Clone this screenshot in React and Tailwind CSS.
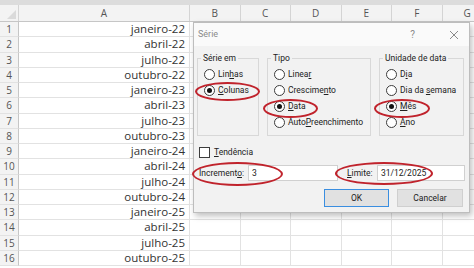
import React from "react";

const months = ["janeiro", "abril", "julho", "outubro"];
const data = [];
for (const y of [22, 23, 24, 25]) for (const m of months) data.push(`${m}-${y}`);
const cols = ["B", "C", "D", "E", "F", "G"];

function U({ t, i }) {
  return (
    <span>
      {t.slice(0, i)}
      <span className="underline underline-offset-1">{t[i]}</span>
      {t.slice(i + 1)}
    </span>
  );
}

function Radio({ on, label }) {
  return (
    <div className="flex items-center gap-[3px] h-[16px] whitespace-nowrap">
      <span className="w-[11px] h-[11px] rounded-full border border-[#3c3c3c] bg-white flex items-center justify-center shrink-0">
        {on && <span className="w-[5px] h-[5px] rounded-full bg-[#111]" />}
      </span>
      <span>{label}</span>
    </div>
  );
}

function Ellipse({ cls }) {
  return <div className={`absolute rounded-[50%] border-2 border-[#c0232c] ${cls}`} />;
}

export default function App() {
  return (
    <div
      className="relative w-[474px] h-[268px] overflow-hidden bg-white text-[#222]"
      style={{ fontFamily: '"Open Sans", "Noto Sans", sans-serif' }}
    >
      {/* top band */}
      <div className="h-[5px] bg-[#dcdcdc]" />
      {/* header row */}
      <div className="flex h-[17px] bg-[#f3f3f3] border-b border-[#c6c6c6] text-[10px] leading-[14px] text-[#555]">
        <div className="w-[19px] shrink-0 border-r border-[#d4d4d4] flex items-end justify-end p-[2px]">
          <div className="w-0 h-0 border-l-[9px] border-l-transparent border-b-[9px] border-b-[#dadada]" />
        </div>
        <div className="w-[171px] shrink-0 border-r border-[#d4d4d4] flex items-center justify-center">A</div>
        {cols.map((c) => (
          <div key={c} className="w-[50.5px] shrink-0 border-r border-[#d4d4d4] flex items-center justify-center">
            {c}
          </div>
        ))}
      </div>
      {/* rows */}
      {data.map((d, i) => (
        <div key={i} className="flex h-[15.25px] text-[11.5px] leading-[14px]">
          <div className="w-[19px] shrink-0 bg-[#f3f3f3] border-r border-[#c6c6c6] border-b border-b-[#e2e2e2] flex items-center justify-center text-[10px] text-[#555]">
            {i + 1}
          </div>
          <div className="w-[171px] shrink-0 border-r border-b border-[#e2e2e2] flex items-center justify-end pr-[4px] text-[#333]">
            {d}
          </div>
          {cols.map((c) => (
            <div key={c} className="w-[50.5px] shrink-0 border-r border-b border-[#e2e2e2]" />
          ))}
        </div>
      ))}

      {/* dialog */}
      <div
        className="absolute left-[193px] top-[22px] w-[277px] h-[191px] bg-[#f2f2f2] border border-[#bdbdbd] shadow-[2px_3px_6px_rgba(0,0,0,0.25)] text-[8.5px] text-[#222] flex flex-col"
        style={{ fontFamily: 'Roboto, "Noto Sans", sans-serif' }}
      >
        <div className="h-[23px] bg-[#fafafa] flex items-center pl-[4px] pr-[10px] text-[#8a8a8a] shrink-0 text-[9px]">
          <span className="flex-1">Série</span>
          <span className="mr-[34px] text-[10px]">?</span>
          <svg width="10" height="10" viewBox="0 0 10 10">
            <path d="M1 1 L9 9 M9 1 L1 9" stroke="#8a8a8a" strokeWidth="1" />
          </svg>
        </div>
        <div className="flex gap-[8px] px-[3px] pt-[8px] leading-none">
          <fieldset className="min-w-0 w-[62px] h-[82px] border border-[#d8d8d8] px-[6px] pt-[4px]">
            <legend className="px-[2px] -ml-[3px]">Série em</legend>
            <Radio label={<U t="Linhas" i={3} />} />
            <Radio on label={<U t="Colunas" i={0} />} />
          </fieldset>
          <fieldset className="min-w-0 w-[104px] h-[82px] border border-[#d8d8d8] px-[6px] pt-[4px]">
            <legend className="px-[2px] -ml-[3px]">Tipo</legend>
            <Radio label={<U t="Linear" i={5} />} />
            <Radio label={<U t="Crescimento" i={8} />} />
            <Radio on label={<U t="Data" i={0} />} />
            <Radio label={<U t="AutoPreenchimento" i={4} />} />
          </fieldset>
          <fieldset className="min-w-0 w-[85px] h-[82px] border border-[#d8d8d8] px-[6px] pt-[4px]">
            <legend className="px-[2px] -ml-[3px] whitespace-nowrap">Unidade de data</legend>
            <Radio label={<U t="Dia" i={1} />} />
            <Radio label={<U t="Dia da semana" i={7} />} />
            <Radio on label={<U t="Mês" i={0} />} />
            <Radio label={<U t="Ano" i={0} />} />
          </fieldset>
        </div>
        <div className="flex items-center gap-[4px] pl-[5px] mt-[10px] h-[12px]">
          <span className="w-[11px] h-[11px] border border-[#3c3c3c] bg-white" />
          <U t="Tendência" i={0} />
        </div>
        <div className="flex items-center pl-[5px] mt-[7px] h-[16px]">
          <span className="w-[49px]"><U t="Incremento:" i={9} /></span>
          <div className="w-[90px] h-[16px] bg-white border border-[#d0d0d0] flex items-center pl-[3px]">3</div>
          <span className="ml-[9px] w-[30px]"><U t="Limite:" i={0} /></span>
          <div className="w-[88px] h-[16px] bg-white border border-[#d0d0d0] flex items-center pl-[3px]">31/12/2025</div>
        </div>
        <div className="flex justify-end gap-[8px] pr-[6px] mt-[8px]">
          <div className="w-[65px] h-[18px] bg-[#e1e1e1] border border-[#3a8ee0] flex items-center justify-center">OK</div>
          <div className="w-[66px] h-[18px] bg-[#e1e1e1] border border-[#cfcfcf] flex items-center justify-center">Cancelar</div>
        </div>
      </div>

      <Ellipse cls="left-[195px] top-[82px] w-[65px] h-[19px]" />
      <Ellipse cls="left-[263px] top-[99px] w-[55px] h-[19px]" />
      <Ellipse cls="left-[374px] top-[99px] w-[56px] h-[19px]" />
      <Ellipse cls="left-[192px] top-[162px] w-[91px] h-[24px]" />
      <Ellipse cls="left-[335px] top-[162px] w-[98px] h-[23px]" />
    </div>
  );
}
